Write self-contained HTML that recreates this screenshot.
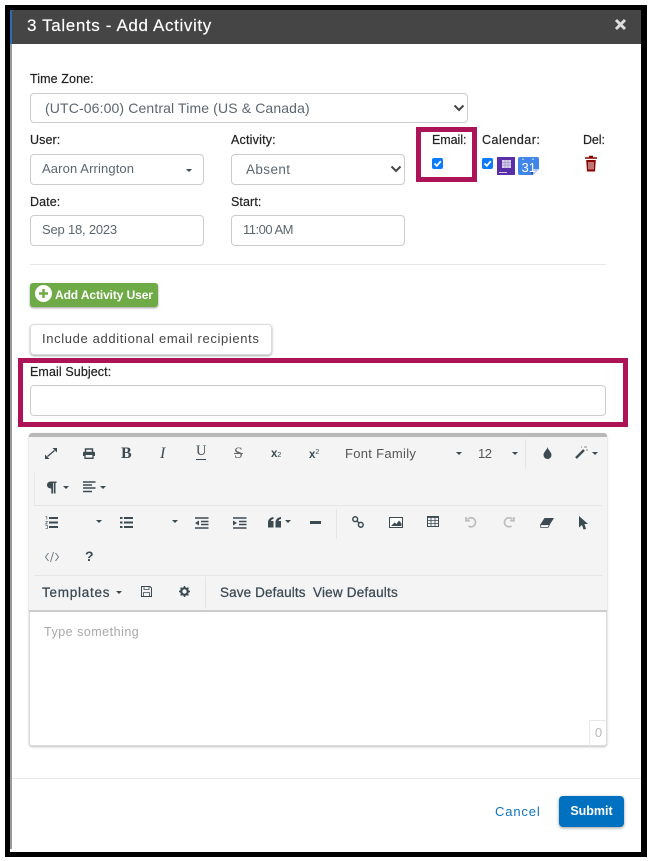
<!DOCTYPE html>
<html><head><meta charset="utf-8"><style>
html,body{margin:0;padding:0;background:#fff}
body{width:652px;height:861px;position:relative;overflow:hidden;font-family:"Liberation Sans",sans-serif;color:#212529}
.a{position:absolute;box-sizing:border-box;white-space:nowrap}
.l{font-size:12.5px;color:#222;line-height:16px;-webkit-text-stroke:.2px #222;letter-spacing:.1px}
.f{background:#fff;border:1px solid #ccc;border-radius:4px;font-size:13px;color:#5c6670;letter-spacing:.12px}
.t{font-size:13.5px;color:#3c4852;-webkit-text-stroke:.25px #3c4852}
.c{width:11px;height:11px;background:#0d7bff;border-radius:2px}
.i{position:absolute;overflow:visible}
.car{position:absolute;width:0;height:0;border-left:3px solid transparent;border-right:3px solid transparent;border-top:3px solid #3c4a52}
</style></head><body>
<div class="a" style="left:5px;top:5px;width:642px;height:852px;background:#000"></div>
<div class="a" style="left:10px;top:10px;width:631px;height:842px;background:#fff"></div>
<div class="a" style="left:10px;top:44px;width:2px;height:805px;background:#999"></div>
<div class="a" style="left:10px;top:10px;width:631px;height:34px;background:#454545"></div>
<div class="a" style="left:10px;top:10px;width:2px;height:34px;background:#2a6db0"></div>
<div class="a" style="left:27px;top:15px;font-size:17px;line-height:22px;color:#fff;letter-spacing:.63px;-webkit-text-stroke:.15px #fff">3 Talents - Add Activity</div>
<svg class="i" style="left:614px;top:18px" width="13" height="13"><path d="M2 2L11 11M11 2L2 11" stroke="#ddd" stroke-width="3"/></svg>

<div class="a l" style="left:30px;top:71px">Time Zone:</div>
<div class="a f" style="left:30px;top:93px;width:438px;height:30px;line-height:29px;padding-left:14px;font-size:14px;letter-spacing:.13px">(UTC-06:00) Central Time (US &amp; Canada)</div>
<svg class="i" style="left:453px;top:104px" width="12" height="8"><path d="M1.5 1.5L6 6L10.5 1.5" fill="none" stroke="#444" stroke-width="2"/></svg>

<div class="a l" style="left:30px;top:132px">User:</div>
<div class="a f" style="left:30px;top:154px;width:174px;height:31px;line-height:27px;padding-left:11px">Aaron Arrington</div>
<div class="car" style="left:186px;top:169px"></div>
<div class="a l" style="left:231px;top:132px;letter-spacing:.2px">Activity:</div>
<div class="a f" style="left:231px;top:154px;width:174px;height:31px;line-height:29px;padding-left:14px;font-size:13.5px;letter-spacing:.4px">Absent</div>
<svg class="i" style="left:390px;top:165px" width="12" height="8"><path d="M1.5 1.5L6 6L10.5 1.5" fill="none" stroke="#444" stroke-width="2"/></svg>

<div class="a" style="left:416px;top:127px;width:61px;height:55px;border:5px solid #ad1457"></div>
<div class="a l" style="left:432px;top:132px;letter-spacing:-.05px">Email:</div>
<div class="a c" style="left:432px;top:158px"></div>
<svg class="i" style="left:432px;top:158px" width="11" height="11"><path d="M2.5 5.5L4.8 7.8L8.8 3.2" fill="none" stroke="#fff" stroke-width="1.8"/></svg>
<div class="a l" style="left:482px;top:132px;letter-spacing:.45px">Calendar:</div>
<div class="a c" style="left:482px;top:158px"></div>
<svg class="i" style="left:482px;top:158px" width="11" height="11"><path d="M2.5 5.5L4.8 7.8L8.8 3.2" fill="none" stroke="#fff" stroke-width="1.8"/></svg>
<svg class="i" style="left:497px;top:157px" width="18" height="18"><rect width="18" height="18" fill="#5a2ea6"/><rect x="5" y="3" width="9" height="8" fill="#d6cfea"/><path d="M5 5.5H14M5 8H14M8 3V11M11 3V11" stroke="#8f78c4" stroke-width=".5"/><rect x="2" y="15" width="8" height="1" fill="#cfc6e6"/></svg>
<svg class="i" style="left:518px;top:157px" width="21" height="18"><path d="M2 0H19Q21 0 21 2V12L15 18H2Q0 18 0 16V2Q0 0 2 0Z" fill="#4285e8"/><path d="M21 12L15 18V12Z" fill="#a9c6f5"/><path d="M15 18L12.500 15.500L15 14Z" fill="#2a4f90"/><path d="M5 1.500V3M15 1.500V3" stroke="#fff" stroke-width="1"/><text x="3.500" y="15" font-family="Liberation Sans" font-size="13" fill="#fff">31</text></svg>
<div class="a l" style="left:583px;top:132px;letter-spacing:-.1px">Del:</div>
<svg class="i" style="left:585px;top:155px" width="12" height="17"><path d="M4 1.5H8M0 3H12" stroke="#8b0000" stroke-width="1.6" fill="none"/><path d="M1.2 5H10.8L10 16.5H2Z" fill="#8b0000"/><path d="M4 7V14.5M6 7V14.5M8 7V14.5" stroke="#fff" stroke-width=".9"/></svg>

<div class="a l" style="left:30px;top:194px">Date:</div>
<div class="a f" style="left:30px;top:215px;width:174px;height:31px;line-height:28px;padding-left:11px;letter-spacing:-.2px">Sep 18, 2023</div>
<div class="a l" style="left:231px;top:194px">Start:</div>
<div class="a f" style="left:231px;top:215px;width:174px;height:31px;line-height:28px;padding-left:11px;letter-spacing:-.5px">11:00 AM</div>

<div class="a" style="left:30px;top:264px;width:576px;height:1px;background:#e8e8e8"></div>

<div class="a" style="left:30px;top:283px;width:128px;height:24px;background:#6eaa45;border-radius:3px;box-shadow:0 1px 2px rgba(0,0,0,.4)"></div>
<svg class="i" style="left:35px;top:285px" width="17" height="17"><circle cx="8.5" cy="8.5" r="8.5" fill="#fff"/><path d="M8.5 4V13M4 8.5H13" stroke="#6eaa45" stroke-width="2.4"/></svg>
<div class="a" style="left:55px;top:288px;font-size:12px;line-height:15px;color:#fff;font-weight:bold;letter-spacing:-.1px">Add Activity User</div>

<div class="a" style="left:30px;top:324px;width:242px;height:31px;background:#fff;border:1px solid #ddd;border-radius:4px;box-shadow:0 1px 2px rgba(0,0,0,.35);font-size:13px;line-height:28px;padding-left:11px;color:#444;letter-spacing:.64px">Include additional email recipients</div>

<div class="a" style="left:18px;top:358px;width:610px;height:69px;border:5px solid #ad1457"></div>
<div class="a l" style="left:30px;top:364px">Email Subject:</div>
<div class="a" style="left:30px;top:385px;width:576px;height:31px;background:#fff;border:1px solid #ccc;border-radius:4px"></div>

<div class="a" style="left:29px;top:433px;width:578px;height:313px;background:#fff;border:1px solid #ddd;border-top:0;border-radius:3px;box-shadow:0 1px 2px rgba(0,0,0,.25)"></div>
<div class="a" style="left:29px;top:433px;width:578px;height:179px;background:#f4f4f4;border-top:4px solid #b9b9b9;border-bottom:2px solid #ccc;border-radius:3px 3px 0 0"></div>
<div class="a" style="left:34px;top:505px;width:568px;height:1px;background:#e6e6e6"></div>
<div class="a" style="left:34px;top:575px;width:568px;height:1px;background:#e6e6e6"></div>
<div class="a" style="left:34px;top:473px;width:1px;height:32px;background:#e9e9e9"></div>
<div class="a" style="left:525px;top:439px;width:1px;height:30px;background:#e6e6e6"></div>
<div class="a" style="left:336px;top:509px;width:1px;height:30px;background:#e6e6e6"></div>
<div class="a" style="left:205px;top:577px;width:1px;height:32px;background:#e6e6e6"></div>

<svg class="i" style="left:45px;top:448px" width="12" height="11"><path d="M0 11V6.500L4.500 11Z M12 0V4.500L7.500 0Z" fill="#3c4a52"/><path d="M2.500 8.500L9.500 2.500" stroke="#3c4a52" stroke-width="1.300"/></svg>
<svg class="i" style="left:83px;top:448px" width="12" height="11"><path d="M2.500 4V1H9.500V4" fill="none" stroke="#3c4a52" stroke-width="1.400"/><path d="M1 3.800H11Q12 3.800 12 5V8H0V5Q0 3.800 1 3.800Z" fill="#3c4a52"/><path d="M2 6.300H10V10.300H2Z" fill="#f4f4f4" stroke="#3c4a52" stroke-width="1.300"/></svg>
<div class="a" style="left:121px;top:445px;font:bold 16px/18px 'Liberation Serif',serif;color:#3c4a52">B</div>
<div class="a" style="left:160px;top:445px;font:italic 16px/18px 'Liberation Serif',serif;color:#3c4a52">I</div>
<div class="a" style="left:196px;top:444px;font:14.500px/15px 'Liberation Serif',serif;color:#3c4a52;border-bottom:1.500px solid #3c4a52">U</div>
<div class="a" style="left:234px;top:445px;font:16px/18px 'Liberation Serif',serif;color:#666;text-decoration:line-through">S</div>
<div class="a" style="left:271px;top:447px;font:bold 11.500px/15px 'Liberation Sans',sans-serif;color:#3c4a52">x<span style="font-size:7px;font-weight:normal">2</span></div>
<div class="a" style="left:309px;top:445px;font:bold 11.500px/15px 'Liberation Sans',sans-serif;color:#3c4a52">x<span style="font-size:7px;font-weight:normal;vertical-align:4px">2</span></div>
<div class="a" style="left:345px;top:446px;font-size:13px;line-height:15px;color:#555;letter-spacing:.3px">Font Family</div>
<div class="car" style="left:456px;top:452px"></div>
<div class="a" style="left:478px;top:446px;font-size:13px;line-height:15px;color:#555;letter-spacing:-.5px">12</div>
<div class="car" style="left:512px;top:452px"></div>
<svg class="i" style="left:543px;top:447px" width="9" height="12"><path d="M4.500 0C4 3 .5 5 .5 8A4 4 0 0 0 8.500 8C8.500 5 5 3 4.500 0Z" fill="#3c4a52"/></svg>
<svg class="i" style="left:575px;top:446px" width="13" height="13"><path d="M1 12L9 4" stroke="#3c4a52" stroke-width="2.400"/><path d="M9 1L12 1M11 4H13M6 1H7" stroke="#888" stroke-width="1"/></svg>
<div class="car" style="left:592px;top:452px"></div>

<svg class="i" style="left:47px;top:481px" width="10" height="13"><path d="M4 .5H9.500V2H8.500V12.500H6.800V2H6V12.500H4.300V7.500C1.500 7.500 0 6 0 4C0 2 1.500 .5 4 .5Z" fill="#3c4a52"/></svg>
<div class="car" style="left:63px;top:486px"></div>
<svg class="i" style="left:83px;top:481px" width="13" height="12"><path d="M0 1H12.500M0 4H9M0 7H12.500M0 10.500H9" stroke="#3c4a52" stroke-width="1.600"/></svg>
<div class="car" style="left:100px;top:486px"></div>

<svg class="i" style="left:45px;top:516px" width="13" height="13"><path d="M4 2H13M4 6.500H13M4 11H13" stroke="#3c4a52" stroke-width="1.900"/><path d="M.5 .500H1.800V3.500M.5 5.500H2.500L.5 8H2.500M.5 9.500H2.500V12.500H.5" fill="none" stroke="#65727a" stroke-width=".8"/></svg>
<div class="car" style="left:96px;top:520px"></div>
<svg class="i" style="left:120px;top:516px" width="13" height="13"><path d="M4 2H13M4 6.500H13M4 11H13" stroke="#3c4a52" stroke-width="1.900"/><path d="M0 2H2.500M0 6.500H2.500M0 11H2.500" stroke="#3c4a52" stroke-width="2"/></svg>
<div class="car" style="left:172px;top:520px"></div>
<svg class="i" style="left:195px;top:517px" width="14" height="12"><path d="M0 1H13.500M6 4.500H13.500M6 7.500H13.500M0 11H13.500" stroke="#3c4a52" stroke-width="1.600"/><path d="M4 3.500V8.500L0 6Z" fill="#3c4a52"/></svg>
<svg class="i" style="left:233px;top:517px" width="14" height="12"><path d="M0 1H13.500M6 4.500H13.500M6 7.500H13.500M0 11H13.500" stroke="#3c4a52" stroke-width="1.600"/><path d="M0 3.500V8.500L4 6Z" fill="#3c4a52"/></svg>
<svg class="i" style="left:268px;top:517px" width="13" height="11"><path d="M0 5.500C0 2.500 2 .5 5.500 0V2C4 2.300 3.200 3 3 4H5.500V10.500H0Z M7.500 5.500C7.500 2.500 9.500 .5 13 0V2C11.500 2.300 10.700 3 10.500 4H13V10.500H7.500Z" fill="#3c4a52"/></svg>
<div class="car" style="left:285px;top:520px"></div>
<div class="a" style="left:310px;top:521px;width:11px;height:3px;background:#3c4a52"></div>
<svg class="i" style="left:352px;top:516px" width="12" height="12"><circle cx="3.200" cy="3.200" r="2.400" fill="none" stroke="#3c4a52" stroke-width="1.500"/><circle cx="8.800" cy="8.800" r="2.400" fill="none" stroke="#3c4a52" stroke-width="1.500"/><path d="M5 5L7 7" stroke="#3c4a52" stroke-width="1.500"/></svg>
<svg class="i" style="left:389px;top:517px" width="14" height="11"><rect x=".5" y=".5" width="13" height="10" fill="#fff" stroke="#3c4a52"/><path d="M2 9L5.500 5.500L7.500 7L10 3.500L12.500 6.500V9Z" fill="#3c4a52"/></svg>
<svg class="i" style="left:427px;top:516px" width="12" height="11"><rect x=".5" y=".5" width="11" height="10" fill="none" stroke="#3c4a52"/><path d="M0 1.200H12" stroke="#3c4a52" stroke-width="1.400"/><path d="M0 4.500H12M0 7.500H12M4 0V11M8 0V11" stroke="#3c4a52" stroke-width=".8"/></svg>
<svg class="i" style="left:465px;top:516px" width="12" height="12"><path d="M2.500 3.500A4.500 4.500 0 1 1 3.500 10M1 1V4.800H4.800" fill="none" stroke="#bdbdbd" stroke-width="1.700"/></svg>
<svg class="i" style="left:503px;top:516px" width="12" height="12"><path d="M9.500 3.500A4.500 4.500 0 1 0 8.500 10M11 1V4.800H7.200" fill="none" stroke="#bdbdbd" stroke-width="1.700"/></svg>
<svg class="i" style="left:540px;top:518px" width="14" height="10"><path d="M4.500 0H14L9.500 7H0Z" fill="#3c4a52"/><path d="M.7 6.700H9.500L8 9.500H.7Z" fill="#fff" stroke="#3c4a52" stroke-width=".8"/></svg>
<svg class="i" style="left:579px;top:516px" width="10" height="14"><path d="M0 0L9 8H5.500L7 13L4.500 13.500L3 9L0 11.500Z" fill="#3c4a52"/></svg>

<svg class="i" style="left:45px;top:552px" width="14" height="10"><path d="M3.500 1L.5 5L3.500 9M10.500 1L13.500 5L10.500 9M8.500 0L5.500 10" fill="none" stroke="#65727a" stroke-width=".9"/></svg>
<div class="a" style="left:85px;top:549px;font:bold 14px/15px 'Liberation Sans',sans-serif;color:#3c4a52">?</div>

<div class="a t" style="left:42px;top:585px;line-height:16px;letter-spacing:.75px">Templates</div>
<div class="car" style="left:116px;top:591px"></div>
<svg class="i" style="left:141px;top:586px" width="11" height="11"><path d="M.5.500H9L10.500 2V10.500H.5Z" fill="none" stroke="#3c4a52"/><path d="M3 .5V3.500H8V.5M2.500 10.500V6.500H8.500V10.500" fill="none" stroke="#3c4a52" stroke-width=".8"/></svg>
<svg class="i" style="left:179px;top:586px" width="11" height="11"><circle cx="5.500" cy="5.500" r="3.300" fill="none" stroke="#3c4a52" stroke-width="2.200"/><path d="M5.500 0V11M0 5.500H11M1.600 1.600L9.400 9.400M9.400 1.600L1.600 9.400" stroke="#3c4a52" stroke-width="1.500" stroke-dasharray="1.800 7.400"/></svg>
<div class="a t" style="left:220px;top:585px;line-height:16px;letter-spacing:.12px">Save Defaults</div>
<div class="a t" style="left:313px;top:585px;line-height:16px;letter-spacing:.2px">View Defaults</div>

<div class="a" style="left:44px;top:625px;font-size:12.500px;line-height:15px;color:#a8a8a8;letter-spacing:.5px">Type something</div>
<div class="a" style="left:589px;top:720px;width:18px;height:26px;border-left:1px solid #e8e8e8;border-top:1px solid #e8e8e8;font-size:13px;line-height:23px;text-align:center;color:#bbb">0</div>

<div class="a" style="left:12px;top:778px;width:629px;height:1px;background:#e6e6e6"></div>
<div class="a" style="left:495px;top:804px;font-size:13px;line-height:16px;color:#1173c0;letter-spacing:.85px">Cancel</div>
<div class="a" style="left:559px;top:796px;width:65px;height:31px;background:#0070c0;border-radius:4px;box-shadow:0 1px 3px rgba(0,0,0,.4);font-size:12.500px;font-weight:bold;line-height:31px;text-align:center;color:#fff">Submit</div>
</body></html>
